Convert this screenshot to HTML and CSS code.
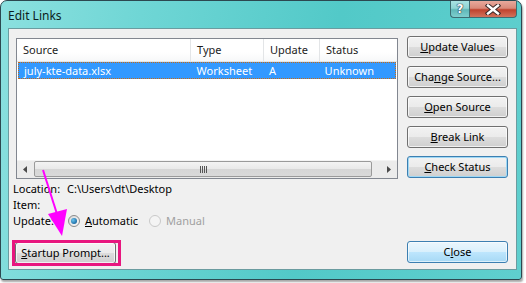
FILE: index.html
```html
<!DOCTYPE html>
<html>
<head>
  <meta charset="UTF-8">
  <title>Edit Links</title>
  <link rel="stylesheet" href="styles.css">
</head>
<body>
  <div class="window">
    <div class="titlebar">
      <span class="title">Edit Links</span>
      <div class="caption-buttons">
        <span class="cap help">?</span>
        <span class="cap close">
          <svg width="16" height="11" viewBox="0 0 16 11">
            <path d="M3 1.5 L13 9.5 M13 1.5 L3 9.5" stroke="#3a2a28" stroke-width="4.4" stroke-linecap="square"/>
            <path d="M3 1.5 L13 9.5 M13 1.5 L3 9.5" stroke="#fff" stroke-width="2.4" stroke-linecap="square"/>
          </svg>
        </span>
      </div>
    </div>

    <div class="client">
      <div class="top-row">
        <div class="listview">
          <div class="lv-header">
            <span class="col col-source">Source</span>
            <span class="col col-type">Type</span>
            <span class="col col-update">Update</span>
            <span class="col col-status">Status</span>
          </div>
          <div class="lv-row selected">
            <span class="col col-source">july-kte-data.xlsx</span>
            <span class="col col-type">Worksheet</span>
            <span class="col col-update">A</span>
            <span class="col col-status">Unknown</span>
          </div>
          <div class="lv-body"></div>
          <div class="hscroll">
            <span class="sb-arrow">
              <svg width="5" height="7" viewBox="0 0 5 7"><path d="M4 0 L0 3.5 L4 7 Z" fill="#4a4a4a"/></svg>
            </span>
            <span class="sb-thumb"><span class="grip"></span></span>
            <span class="sb-track"></span>
            <span class="sb-arrow">
              <svg width="5" height="7" viewBox="0 0 5 7"><path d="M1 0 L5 3.5 L1 7 Z" fill="#4a4a4a"/></svg>
            </span>
          </div>
        </div>

        <div class="side-buttons">
          <button class="btn"><u>U</u>pdate Values</button>
          <button class="btn">Cha<u>n</u>ge Source...</button>
          <button class="btn"><u>O</u>pen Source</button>
          <button class="btn"><u>B</u>reak Link</button>
          <button class="btn focused"><u>C</u>heck Status</button>
        </div>
      </div>

      <div class="info">
        <div class="info-line"><span class="label">Location:</span><span>C:\Users\dt\Desktop</span></div>
        <div class="info-line"><span class="label">Item:</span></div>
        <div class="info-line">
          <span class="label">Update:</span>
          <span class="radio checked"></span><span class="radio-text"><u>A</u>utomatic</span>
          <span class="radio disabled"></span><span class="radio-text disabled">Manual</span>
        </div>
      </div>

      <div class="bottom-row">
        <div class="highlight">
          <button class="btn startup"><u>S</u>tartup Prompt...</button>
        </div>
        <button class="btn default">C<u>l</u>ose</button>
      </div>
    </div>
  </div>

  <svg class="annotation" width="526" height="283" viewBox="0 0 526 283">
    <line x1="43" y1="170" x2="57" y2="214" stroke="#ff00ff" stroke-width="2"/>
    <polygon points="48,214 67,209 62,236" fill="#ff00ff"/>
  </svg>
</body>
</html>
```

FILE: styles.css
```css
body {
  margin: 0;
  width: 526px;
  height: 283px;
  background: #fff;
  font-family: "Noto Sans", sans-serif;
  font-size: 11px;
  color: #000;
  position: relative;
  overflow: hidden;
}

.window {
  box-sizing: border-box;
  width: 522px;
  height: 280px;
  border: 1px solid #2c4850;
  border-radius: 7px 7px 3px 3px;
  background: linear-gradient(100deg, #8be0df 0%, #6fd6d5 25%, #52c9c8 60%, #5fcfce 100%);
  padding: 0 4px 8px 7px;
  box-shadow: 1px 2px 2px rgba(0,0,0,0.35);
}

.titlebar {
  height: 27px;
  display: flex;
  justify-content: space-between;
  align-items: flex-start;
}

.title {
  font-size: 12px;
  margin-top: 6px;
  color: #0d1d20;
}

.caption-buttons {
  display: flex;
}

.cap {
  height: 17px;
  display: flex;
  align-items: center;
  justify-content: center;
  border: 1px solid #3d6d72;
  border-top: none;
  box-sizing: border-box;
}

.help {
  width: 19px;
  border-radius: 0 0 0 4px;
  border-right: none;
  background: linear-gradient(#a9e3e3 0%, #8fd4d4 45%, #5fb8b8 55%, #7fcfcf 100%);
  color: #fff;
  font-family: "DejaVu Sans", sans-serif;
  font-weight: bold;
  font-size: 12px;
  text-shadow: 0 0 1px #234, 0 0 1px #234, 0 0 1px #234;
}

.close {
  width: 48px;
  border-radius: 0 0 4px 0;
  background: linear-gradient(#e8a99c 0%, #d98a7a 45%, #c0432e 55%, #d2735c 100%);
}

.client {
  box-sizing: border-box;
  height: 242px;
  border: 1px solid #6b9ca0;
  background: #f0f0f0;
  padding-left: 4px;
}

.top-row {
  display: flex;
  align-items: flex-start;
  padding-top: 7px;
}

.listview {
  box-sizing: border-box;
  width: 382px;
  height: 141px;
  margin: 2px 0 0 3px;
  border: 1px solid #828790;
  background: #fff;
  display: flex;
  flex-direction: column;
  font-size: 11px;
}

.lv-header {
  display: flex;
  height: 22px;
  align-items: center;
  background: linear-gradient(#fff 0%, #fff 60%, #f7f8f9 100%);
  border-bottom: 1px solid #e5e5e5;
  color: #1c1c1c;
}

.col {
  box-sizing: border-box;
  padding-left: 6px;
  white-space: nowrap;
}

.lv-header .col {
  height: 22px;
  line-height: 22px;
  border-right: 1px solid #e3e5e7;
}

.col-source { width: 174px; }
.col-type { width: 73px; }
.col-update { width: 56px; }
.col-status { width: 77px; }

.lv-header .col-status { border-right: none; }

.lv-row {
  display: flex;
  height: 17px;
  line-height: 16px;
  box-sizing: border-box;
  margin: 0 1px;
}

.lv-row .col-source { width: 173px; padding-left: 5px; }

.lv-row.selected {
  background: #3399ff;
  color: #fff;
  border: 1px dotted #c86a14;
}

.lv-body {
  flex: 1;
}

.hscroll {
  height: 17px;
  display: flex;
  background: #ebebeb;
  border-top: 1px solid #f4f4f4;
}

.sb-arrow {
  width: 17px;
  display: flex;
  align-items: center;
  justify-content: center;
}

.sb-thumb {
  box-sizing: border-box;
  width: 338px;
  height: 16px;
  border: 1px solid #9a9a9a;
  border-radius: 2px;
  background: linear-gradient(#f3f3f3 0%, #e9e9e9 50%, #d6d6d6 51%, #d9d9d9 100%);
  display: flex;
  align-items: center;
  justify-content: center;
}

.grip {
  width: 7px;
  height: 7px;
  background: repeating-linear-gradient(90deg, #555 0, #555 1px, transparent 1px, transparent 2px);
}

.sb-track {
  flex: 1;
}

.side-buttons {
  width: 101px;
  margin-left: 9px;
  display: flex;
  flex-direction: column;
  gap: 8px;
}

.btn {
  box-sizing: border-box;
  width: 101px;
  height: 22px;
  padding: 0;
  border: 1px solid #707070;
  border-radius: 3px;
  background: linear-gradient(#f2f2f2 0%, #ebebeb 49%, #dddddd 50%, #cfcfcf 100%);
  box-shadow: inset 0 0 0 1px rgba(255,255,255,0.7);
  font-family: "Noto Sans", sans-serif;
  font-size: 11px;
  color: #000;
  line-height: 18px;
}

.btn.focused {
  border-color: #3c7fb1;
  box-shadow: inset 0 0 0 1px #9fd8f5;
}

.btn.default {
  border-color: #3c7fb1;
  background: linear-gradient(#eaf6fd 0%, #d9f0fc 49%, #bee6fd 50%, #a7d9f5 100%);
  box-shadow: inset 0 0 0 1px rgba(255,255,255,0.6);
}

.info {
  margin-top: 2px;
}

.info-line {
  height: 16px;
  line-height: 16px;
  display: flex;
  align-items: center;
  font-size: 11px;
}

.label {
  width: 54px;
}

.radio {
  box-sizing: border-box;
  width: 12px;
  height: 12px;
  border-radius: 50%;
  border: 1px solid #8a8a8a;
  background: linear-gradient(135deg, #d8d8d8, #fafafa);
  display: flex;
  align-items: center;
  justify-content: center;
  margin-left: 1px;
}

.radio.checked::after {
  content: "";
  width: 6px;
  height: 6px;
  border-radius: 50%;
  background: radial-gradient(circle at 35% 35%, #6ac4ee 0%, #1f6fa8 70%, #154f7a 100%);
}

.radio.disabled {
  border-color: #c9c9c9;
  background: #f4f4f4;
  margin-left: 11px;
}

.radio-text {
  margin-left: 5px;
}

.radio-text.disabled {
  color: #a0a0a0;
}

.bottom-row {
  display: flex;
  justify-content: space-between;
  align-items: flex-start;
  margin-top: 11px;
  padding-right: 8px;
}

.highlight {
  margin-left: -1px;
  border: 3px solid #e8177f;
  padding: 0 2px 0 0;
  height: 20px;
  overflow: hidden;
}

.btn.startup {
  height: 22px;
  margin-top: -1px;
}

.bottom-row .btn.default {
  margin-top: 1px;
}

.annotation {
  position: absolute;
  left: 0;
  top: 0;
  pointer-events: none;
}
```
